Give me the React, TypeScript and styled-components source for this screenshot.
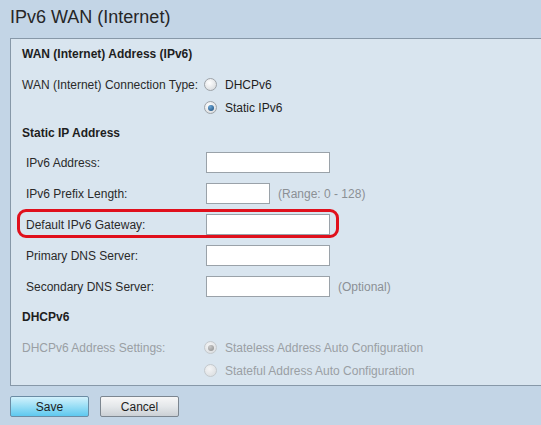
import React from "react";
import styled, { createGlobalStyle, css } from "styled-components";

const GlobalStyle = createGlobalStyle`
  html, body {
    margin: 0;
    padding: 0;
    background: #c3d5e6;
    overflow: hidden;
  }
  body {
    font-family: "Liberation Sans", Arial, sans-serif;
    font-size: 12px;
    color: #222222;
  }
`;

const Page = styled.div`
  width: 541px;
  height: 425px;
  background: #c3d5e6;
`;

const Header = styled.div`
  height: 38px;
  box-sizing: border-box;
  padding: 6px 0 0 10px;
`;

const Title = styled.h1`
  margin: 0;
  font-size: 18px;
  font-weight: normal;
  color: #262626;
  line-height: 22px;
`;

const Panel = styled.div`
  margin-left: 10px;
  background: #d9e5ef;
  border-top: 1px solid #8798a8;
  border-left: 1px solid #8798a8;
  border-bottom: 1px solid #8798a8;
  padding-bottom: 3px;
`;

const SectionTitle = styled.div<{ $h: number }>`
  height: ${(p) => p.$h}px;
  display: flex;
  align-items: center;
  padding-left: 11px;
  font-weight: bold;
  color: #1e1e1e;
`;

const Row = styled.div<{ $h?: number }>`
  position: relative;
  display: grid;
  grid-template-columns: 193px 1fr;
  align-items: center;
  height: ${(p) => p.$h ?? 31}px;
`;

const Label = styled.span<{ $indent?: boolean; $disabled?: boolean }>`
  padding-left: ${(p) => (p.$indent ? 15 : 11)}px;
  color: ${(p) => (p.$disabled ? "#9a9fa4" : "#2a2a2a")};
  white-space: nowrap;
`;

const Control = styled.div`
  display: flex;
  align-items: center;
  gap: 8px;
`;

const RadioGroup = styled.div`
  padding-top: 4px;
`;

const TextInput = styled.input<{ $w: number }>`
  box-sizing: border-box;
  width: ${(p) => p.$w}px;
  height: 21px;
  margin: 0 0 0 2px;
  padding: 0 3px;
  border: 1px solid #9aa2a9;
  background: #ffffff;
  font-family: inherit;
  font-size: 12px;
  outline: none;
`;

const Hint = styled.span`
  color: #8b9095;
`;

const RadioDot = styled.span<{ $checked?: boolean; $disabled?: boolean }>`
  position: relative;
  box-sizing: border-box;
  width: 13px;
  height: 13px;
  border-radius: 50%;
  flex: none;
  border: 1px solid ${(p) => (p.$disabled ? "#c4c9cd" : "#9ea3a8")};
  background: ${(p) =>
    p.$disabled
      ? "radial-gradient(circle at 40% 35%, #f4f5f6, #d7dadd)"
      : "radial-gradient(circle at 40% 35%, #ffffff, #d2d5d8)"};
  ${(p) =>
    p.$checked &&
    css`
      &::after {
        content: "";
        position: absolute;
        left: 2.5px;
        top: 2.5px;
        width: 6px;
        height: 6px;
        border-radius: 50%;
        background: ${p.$disabled
          ? "radial-gradient(circle at 35% 30%, #c8c8c8, #8c8c8c)"
          : "radial-gradient(circle at 35% 30%, #6aa6d6, #1b4a78)"};
      }
    `}
`;

const RadioText = styled.span<{ $disabled?: boolean }>`
  color: ${(p) => (p.$disabled ? "#9a9fa4" : "#1e1e1e")};
`;

// red annotation ring drawn over the gateway row
const Highlight = styled.div`
  position: absolute;
  left: 6px;
  top: 0;
  width: 322px;
  height: 29px;
  box-sizing: border-box;
  border: 3px solid #e0101c;
  border-radius: 9px;
  pointer-events: none;
`;

const ButtonBar = styled.div`
  display: flex;
  gap: 11px;
  padding: 10px 0 0 10px;
`;

const Button = styled.button<{ $primary?: boolean }>`
  box-sizing: border-box;
  width: 79px;
  height: 21px;
  padding: 0;
  border-radius: 2px;
  font-family: inherit;
  font-size: 12px;
  color: #1e1e1e;
  border: 1px solid ${(p) => (p.$primary ? "#6b8ca4" : "#7c8690")};
  background: ${(p) =>
    p.$primary
      ? "linear-gradient(#d2f1fc, #9ee0f6 45%, #5ec8ef)"
      : "linear-gradient(#f7f7f7, #e4e7ea 50%, #cbd0d5)"};
`;

type RadioProps = { label: string; checked?: boolean; disabled?: boolean };

const Radio = ({ label, checked, disabled }: RadioProps) => (
  <Control>
    <RadioDot $checked={checked} $disabled={disabled} />
    <RadioText $disabled={disabled}>{label}</RadioText>
  </Control>
);

type FieldProps = { label: string; width: number; hint?: string; highlight?: boolean };

const Field = ({ label, width, hint, highlight }: FieldProps) => (
  <Row>
    {highlight && <Highlight />}
    <Label $indent>{label}</Label>
    <Control>
      <TextInput $w={width} type="text" />
      {hint && <Hint>{hint}</Hint>}
    </Control>
  </Row>
);

const App = () => {
  return (
    <Page>
      <GlobalStyle />
      <Header>
        <Title>IPv6 WAN (Internet)</Title>
      </Header>
      <Panel>
        <SectionTitle $h={30}>WAN (Internet) Address (IPv6)</SectionTitle>
        <RadioGroup>
          <Row $h={23}>
            <Label>WAN (Internet) Connection Type:</Label>
            <Radio label="DHCPv6" />
          </Row>
          <Row $h={23}>
            <span />
            <Radio label="Static IPv6" checked />
          </Row>
        </RadioGroup>
        <SectionTitle $h={28}>Static IP Address</SectionTitle>
        <Field label="IPv6 Address:" width={124} />
        <Field label="IPv6 Prefix Length:" width={64} hint="(Range: 0 - 128)" />
        <Field label="Default IPv6 Gateway:" width={124} highlight />
        <Field label="Primary DNS Server:" width={124} />
        <Field label="Secondary DNS Server:" width={124} hint="(Optional)" />
        <SectionTitle $h={30}>DHCPv6</SectionTitle>
        <RadioGroup>
          <Row $h={23}>
            <Label $disabled>DHCPv6 Address Settings:</Label>
            <Radio label="Stateless Address Auto Configuration" checked disabled />
          </Row>
          <Row $h={23}>
            <span />
            <Radio label="Stateful Address Auto Configuration" disabled />
          </Row>
        </RadioGroup>
      </Panel>
      <ButtonBar>
        <Button $primary>Save</Button>
        <Button>Cancel</Button>
      </ButtonBar>
    </Page>
  );
};

export default App;
